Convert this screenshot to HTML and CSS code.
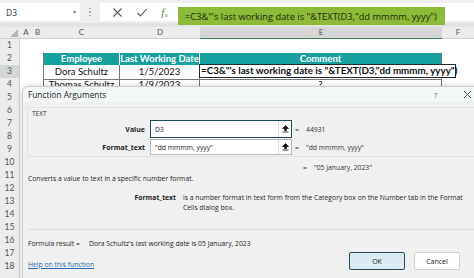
FILE: index.html
```html
<!DOCTYPE html>
<html>
<head>
	<meta charset="utf-8">
	<title>Function Arguments - TEXT</title>
	<link rel="stylesheet" href="styles.css">
</head>
<body>

<div id="excel">
	<div class="formula-bar">
		<div class="name-box"><span>D3</span><span class="drop">&#9662;</span></div>
		<div class="grip"><i></i><i></i><i></i></div>
		<div class="fx-buttons">
			<svg width="11" height="11" viewBox="0 0 11 11"><path d="M1.5 1.5 L9.5 9.5 M9.5 1.5 L1.5 9.5" stroke="#555" stroke-width="1.1" fill="none"/></svg>
			<svg width="12" height="11" viewBox="0 0 12 11"><path d="M1.5 6 L4.5 9 L10.5 2" stroke="#555" stroke-width="1.1" fill="none"/></svg>
			<span class="fx">f<sub>x</sub></span>
		</div>
		<div class="formula"><span class="formula-text">=C3&amp;"'s last working date is "&amp;TEXT(D3,"dd mmmm, yyyy")</span></div>
	</div>
	<div class="band"></div>

	<div class="sheet">
		<div class="row col-headers">
			<div class="corner"><svg width="8" height="8" viewBox="0 0 8 8"><path d="M8 0 L8 8 L0 8 Z" fill="#b5b5b5"/></svg></div>
			<div>A</div><div>B</div><div>C</div><div>D</div><div class="active">E</div><div>F</div>
		</div>
		<div class="row"><div class="rh">1</div></div>
		<div class="row">
			<div class="rh">2</div>
			<div class="cell th col-c">Employee</div>
			<div class="cell th col-d">Last Working Date</div>
			<div class="cell th col-e">Comment</div>
		</div>
		<div class="row">
			<div class="rh active">3</div>
			<div class="cell td col-c">Dora Schultz</div>
			<div class="cell td col-d">1/5/2023</div>
			<div class="cell td col-e"><span class="edit">=C3&amp;"'s last working date is "&amp;TEXT(D3,"dd mmmm, yyyy")</span></div>
		</div>
		<div class="row">
			<div class="rh">4</div>
			<div class="cell td col-c">Thomas Schultz</div>
			<div class="cell td col-d">1/9/2023</div>
			<div class="cell td col-e">?</div>
		</div>
		<div class="row"><div class="rh">5</div></div>
		<div class="row"><div class="rh">6</div></div>
		<div class="row"><div class="rh">7</div></div>
		<div class="row"><div class="rh">8</div></div>
		<div class="row"><div class="rh">9</div></div>
		<div class="row"><div class="rh">10</div></div>
		<div class="row"><div class="rh">11</div></div>
		<div class="row"><div class="rh">12</div></div>
		<div class="row"><div class="rh">13</div></div>
		<div class="row"><div class="rh">14</div></div>
		<div class="row"><div class="rh">15</div></div>
		<div class="row"><div class="rh">16</div></div>
		<div class="row"><div class="rh">17</div></div>
		<div class="row"><div class="rh">18</div></div>
		<div class="row"><div class="rh"></div></div>
	</div>

	<div class="dialog">
		<div class="dlg-title">
			<span class="dlg-name">Function Arguments</span>
			<span class="dlg-help">?</span>
			<svg class="dlg-close" width="9" height="9" viewBox="0 0 9 9"><path d="M1 1 L8 8 M8 1 L1 8" stroke="#444" stroke-width="0.9" fill="none"/></svg>
		</div>

		<div class="args">
			<div class="fn-name">TEXT</div>
			<div class="arg-grid">
				<label>Value</label>
				<div class="arg-input focused"><span>D3</span><span class="collapse"><svg width="7" height="8" viewBox="0 0 7 8"><path d="M3.5 0.5 L6.5 3.5 L4.4 3.5 L4.4 5.6 L2.6 5.6 L2.6 3.5 L0.5 3.5 Z M0.5 7 L6.5 7" fill="#111" stroke="#111" stroke-width="0.8"/></svg></span></div>
				<div class="arg-val"><span class="eq">=</span>44931</div>

				<label>Format_text</label>
				<div class="arg-input"><span>"dd mmmm, yyyy"</span><span class="collapse"><svg width="7" height="8" viewBox="0 0 7 8"><path d="M3.5 0.5 L6.5 3.5 L4.4 3.5 L4.4 5.6 L2.6 5.6 L2.6 3.5 L0.5 3.5 Z M0.5 7 L6.5 7" fill="#111" stroke="#111" stroke-width="0.8"/></svg></span></div>
				<div class="arg-val"><span class="eq">=</span>"dd mmmm, yyyy"</div>
			</div>
		</div>

		<div class="result-line"><span class="eq">=</span>"05 January, 2023"</div>
		<div class="fn-desc">Converts a value to text in a specific number format.</div>
		<div class="arg-desc">
			<b>Format_text</b>
			<span>is a number format in text form from the Category box on the Number tab in the Format Cells dialog box.</span>
		</div>

		<div class="dlg-rule"></div>
		<div class="formula-result"><span class="fr-label">Formula result =</span><span>Dora Schultz's last working date is 05 January, 2023</span></div>

		<div class="dlg-footer">
			<a href="#">Help on this function</a>
			<div class="buttons">
				<button class="ok">OK</button>
				<button>Cancel</button>
			</div>
		</div>
	</div>
</div>

</body>
</html>
```

FILE: styles.css
```css
* {
	box-sizing: border-box;
}
body {
	margin: 0;
	background: #fff;
	overflow: hidden;
}
#excel {
	position: relative;
	width: 474px;
	height: 278px;
	overflow: hidden;
	font-family: "Open Sans", sans-serif;
}

/* formula bar */
.formula-bar {
	display: flex;
	align-items: center;
	height: 23px;
	padding: 3px 0 2px;
	background: #efefef;
}
.name-box {
	display: flex;
	align-items: center;
	justify-content: space-between;
	width: 80px;
	height: 18px;
	padding: 0 4px 0 6px;
	background: #fff;
	font-size: 8.5px;
	color: #333;
}
.name-box .drop {
	font-size: 6px;
	color: #777;
}
.grip {
	display: flex;
	flex-direction: column;
	align-items: center;
	gap: 2px;
	width: 20px;
}
.grip i {
	width: 1.5px;
	height: 1.5px;
	background: #aaa;
}
.fx-buttons {
	display: flex;
	align-items: center;
	justify-content: space-around;
	width: 78px;
	height: 18px;
	padding: 0 4px 0 6px;
	background: #fff;
}
.fx {
	font-family: "Liberation Serif", serif;
	font-style: italic;
	font-size: 11px;
	color: #4a7a4a;
}
.fx sub {
	font-size: 7px;
	vertical-align: -1px;
}
.formula {
	flex: 1;
	height: 18px;
	background: #fff;
}
.formula-text {
	display: inline-block;
	height: 18px;
	padding: 2px 8px 0 7px;
	background: #8dba38;
	font-size: 9.3px;
	line-height: 15px;
	color: #1d2a10;
	white-space: nowrap;
}
.band {
	height: 4px;
	background: #e3e3e3;
}

/* sheet */
.sheet {
	font-family: "Lato", sans-serif;
}
.row {
	display: grid;
	grid-template-columns: 20px 12px 11px 77px 80px 242px 32px;
	height: 13px;
}
.col-headers {
	height: 12px;
	background: #ececec;
	border-bottom: 1px solid #cfcfcf;
	font-size: 8px;
	color: #555;
	text-align: center;
	line-height: 11px;
}
.col-headers .active {
	background: #d6d6d6;
	border-bottom: 1px solid #3c7d55;
}
.corner {
	display: flex;
	align-items: flex-end;
	justify-content: flex-end;
	padding: 0 2px 2px 0;
}
.rh {
	grid-column: 1;
	background: #ececec;
	border-bottom: 1px solid #dadada;
	border-right: 1px solid #cfcfcf;
	font-size: 8.5px;
	line-height: 13px;
	color: #555;
	text-align: center;
}
.rh.active {
	background: #d6d6d6;
	color: #2f6b46;
}
.cell {
	font-size: 9.5px;
	line-height: 12px;
	text-align: center;
	white-space: nowrap;
	border-right: 1px solid #777;
	border-bottom: 1px solid #777;
}
.col-c {
	grid-column: 4;
	border-left: 1px solid #777;
}
.col-d {
	grid-column: 5;
}
.col-e {
	grid-column: 6;
}
.th {
	background: #17a19e;
	color: #fff;
	font-weight: bold;
	border-top: 1px solid #777;
	border-color: #fff;
	border-left-color: #777;
}
.th.col-d,
.th.col-e {
	border-left: none;
}
.th.col-e {
	border-right-color: #777;
}
.td {
	color: #111;
	line-height: 14px;
}
.edit {
	display: block;
	width: 257px;
	height: 14px;
	margin: -1px 0 0 -1px;
	padding-left: 1px;
	background: #fff;
	border: 1.5px solid #1f2b2b;
	font-weight: bold;
	font-size: 9.8px;
	line-height: 11px;
	text-align: left;
}

/* dialog */
.dialog {
	position: absolute;
	left: 22px;
	top: 86px;
	width: 462px;
	height: 196px;
	background: #f0f0f0;
	border: 1px solid #c9cdcf;
	border-radius: 6px 0 0 0;
	box-shadow: 0 0 6px rgba(0, 0, 0, 0.18);
	font-size: 6.8px;
	color: #1e1e1e;
}
.dlg-title {
	display: flex;
	align-items: center;
	height: 15px;
	padding: 0 0 0 5px;
	background: #f4f7f8;
	border-radius: 6px 0 0 0;
	font-size: 8.3px;
	color: #222;
}
.dlg-name {
	flex: 1;
}
.dlg-help {
	width: 29px;
	color: #666;
	font-size: 8px;
}
.dlg-close {
	margin-right: 11px;
}
.args {
	margin: 5px 5px 0 4px;
	height: 50px;
	padding: 1px 0 0 0;
	border: 1px solid #e2e2e2;
}
.fn-name {
	padding-left: 4px;
	font-size: 6.5px;
	line-height: 9px;
	color: #333;
}
.arg-grid {
	display: grid;
	grid-template-columns: 117px 147px 1fr;
	grid-template-rows: 18px 16px;
	row-gap: 1px;
	align-items: center;
	margin-top: 2px;
}
.arg-grid label {
	text-align: right;
	font-weight: bold;
	font-size: 7px;
}
.arg-input {
	display: flex;
	align-items: center;
	justify-content: space-between;
	height: 100%;
	margin-left: 5px;
	padding-left: 4px;
	background: #fff;
	border: 1px solid #b9b9b9;
}
.arg-input.focused {
	border: 1.5px solid #1d4d55;
}
.collapse {
	display: flex;
	align-items: center;
	justify-content: center;
	width: 13px;
	height: 100%;
	border-left: 1px solid #ddd;
}
.arg-val,
.result-line {
	padding-left: 3px;
	color: #333;
}
.eq {
	display: inline-block;
	width: 11px;
}
.result-line {
	margin: 6px 0 0 277px;
	line-height: 10px;
}
.fn-desc {
	margin: 1px 0 0 5px;
	line-height: 10px;
}
.arg-desc {
	display: grid;
	grid-template-columns: 153px 1fr;
	column-gap: 7px;
	margin-top: 9px;
	padding-right: 6px;
	line-height: 10px;
}
.arg-desc b {
	text-align: right;
}
.dlg-rule {
	height: 1px;
	margin: 16px 5px 0 5px;
	background: #dedede;
}
.formula-result {
	display: flex;
	margin: 9px 0 0 5px;
	line-height: 10px;
}
.fr-label {
	width: 61px;
}
.dlg-footer {
	display: flex;
	align-items: center;
	justify-content: space-between;
	margin: 3px 0 0 5px;
}
.dlg-footer a {
	margin-top: 6px;
	color: #2b6cb3;
}
.buttons {
	display: flex;
	gap: 9px;
	margin-right: 23px;
}
.buttons button {
	width: 46px;
	height: 18px;
	padding: 0;
	background: #fdfdfd;
	border: 1px solid #d0d0d0;
	border-radius: 2px;
	font-family: "Open Sans", sans-serif;
	font-size: 7px;
	color: #222;
}
.buttons .ok {
	width: 56px;
	background: #dcebf3;
	border: 1.5px solid #2a4a52;
}
```
